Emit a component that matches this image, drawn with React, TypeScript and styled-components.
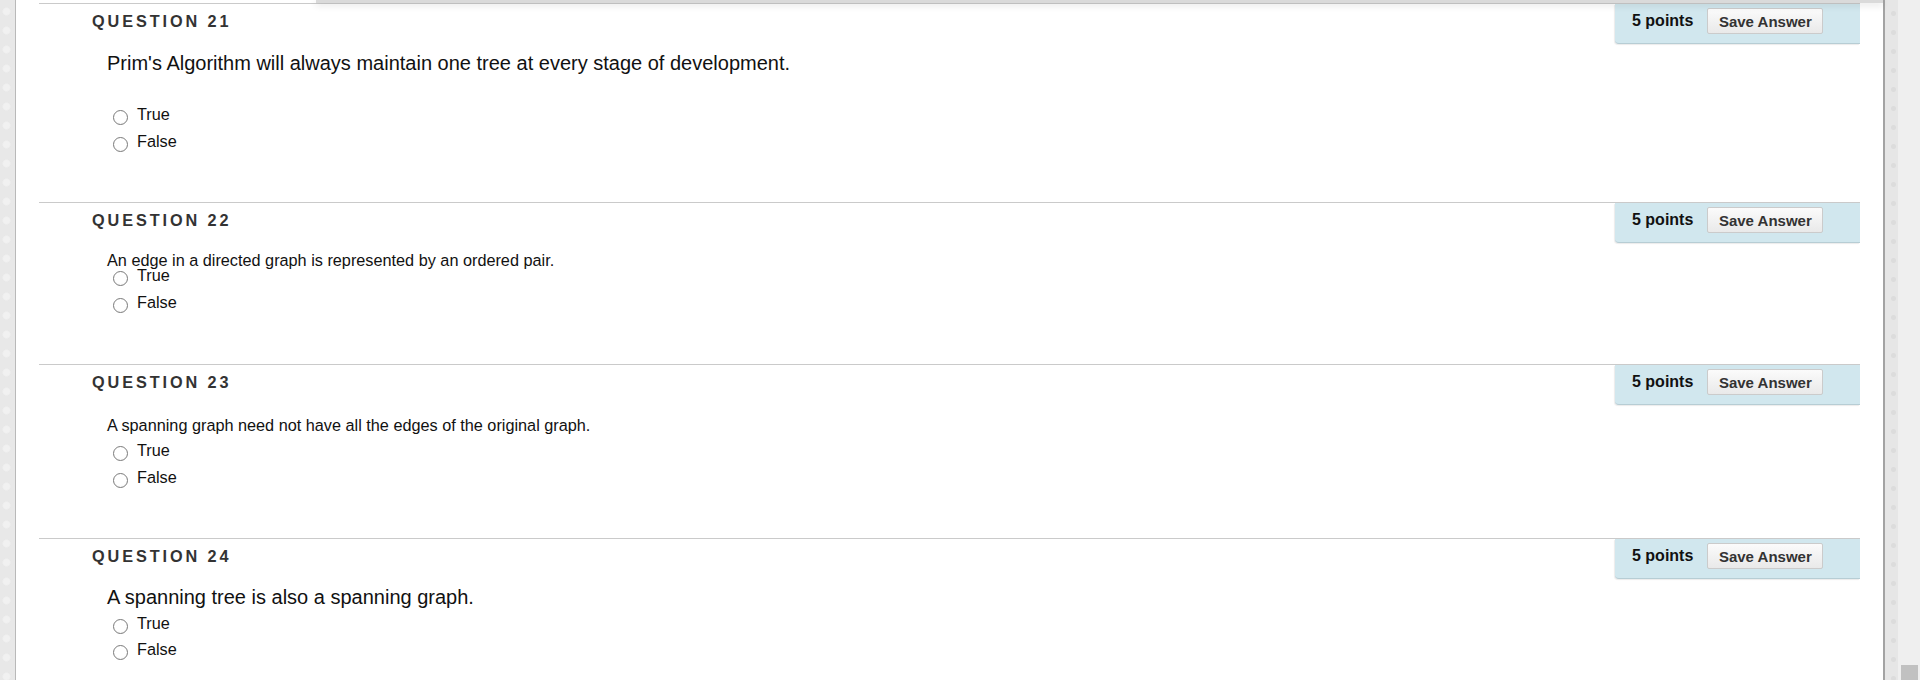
import React from 'react'
import styled, { createGlobalStyle } from 'styled-components'

const GlobalStyle = createGlobalStyle`
  html, body {
    margin: 0;
    padding: 0;
    background: #fff;
    overflow: hidden;
  }
  body {
    font-family: "Liberation Sans", Arial, sans-serif;
  }
`

const Page = styled.div`
  display: flex;
  width: 1920px;
  height: 680px;
  overflow: hidden;
`

const LeftRail = styled.div`
  width: 15px;
  flex-shrink: 0;
  border-right: 1px solid #b9b9b9;
  background-color: #e8e8e8;
  background-image: radial-gradient(circle, #f1f1f1 0, #f1f1f1 3px, transparent 4.5px);
  background-size: 15px 19px;
  background-position: -1px 2px;
`

const Main = styled.div`
  position: relative;
  flex: 1;
  padding-top: 3px;
  background: #fff;
`

const TopShadow = styled.div`
  position: absolute;
  top: 0;
  left: 300px;
  right: 0;
  height: 3px;
  background: #dadada;
  box-shadow: 0 2px 7px rgba(0, 0, 0, 0.16);
  z-index: 2;
`

const RightRail = styled.div`
  width: 13px;
  flex-shrink: 0;
  border-left: 2px solid #a3a3a3;
  background-color: #e6e6e6;
  background-image: radial-gradient(circle, #dcdcdc 0, #dcdcdc 2px, transparent 3px);
  background-size: 13px 19px;
  background-position: 2px 4px;
`

const Scrollbar = styled.div`
  width: 22px;
  flex-shrink: 0;
  background: #efefef;
  display: flex;
  flex-direction: column;
  justify-content: flex-end;
  align-items: center;
`

const Thumb = styled.div`
  width: 17px;
  height: 15px;
  margin-left: 1px;
  background: #c1c1c1;
`

const Section = styled.section<{ $height: number }>`
  box-sizing: border-box;
  height: ${p => p.$height}px;
  margin: 0 23px;
  border-top: 1px solid #cacaca;
`

const Header = styled.div`
  display: flex;
  justify-content: space-between;
  align-items: flex-start;
  height: 40px;
`

const Label = styled.h3`
  margin: 0;
  padding: 7.5px 0 0 53px;
  font-size: 16.25px;
  line-height: 18px;
  font-weight: bold;
  letter-spacing: 2.9px;
  color: #333;
`

const PointsBox = styled.div`
  box-sizing: border-box;
  display: flex;
  align-items: flex-start;
  width: 245px;
  height: 40px;
  padding: 4px 0 0 17px;
  background: #d1e7ee;
  border-bottom: 1px solid #b7cdd4;
  border-bottom-left-radius: 4px;
  box-shadow: -1px 1px 1px rgba(0, 0, 0, 0.08);
`

const Points = styled.span`
  font-size: 16px;
  line-height: 26px;
  font-weight: bold;
  color: #111;
  margin-right: 14px;
`

const SaveButton = styled.button`
  box-sizing: border-box;
  width: 116px;
  height: 26px;
  padding: 0;
  border: 1px solid #cbcbcb;
  border-radius: 2px;
  background: linear-gradient(#fbfbfb, #e9e9e9);
  font-family: "Liberation Sans", Arial, sans-serif;
  font-size: 15px;
  font-weight: bold;
  color: #333;
  cursor: pointer;
`

const QuestionText = styled.div<{ $large?: boolean; $mt: number }>`
  margin: ${p => p.$mt}px 0 0 68px;
  font-size: ${p => (p.$large ? '20px' : '16.25px')};
  line-height: ${p => (p.$large ? '24px' : '16px')};
  color: #111;
`

const Options = styled.div<{ $mt: number }>`
  display: flex;
  flex-direction: column;
  gap: 6.7px;
  margin: ${p => p.$mt}px 0 0 74px;
`

const Option = styled.label`
  display: flex;
  align-items: flex-start;
  gap: 9px;
  height: 20px;
  font-size: 16.25px;
  line-height: 20px;
  color: #111;
`

const Radio = styled.span`
  box-sizing: border-box;
  flex-shrink: 0;
  width: 15px;
  height: 15px;
  margin-top: 6px;
  border: 1px solid #7a7a7a;
  border-radius: 50%;
  background: radial-gradient(circle at 50% 40%, #fff 0, #fff 55%, #f0f0f0 100%);
`

type Q = {
  num: number
  text: string
  large?: boolean
  textMt: number
  optMt: number
  height: number
}

const questions: Q[] = [
  {
    num: 21,
    text: "Prim's Algorithm will always maintain one tree at every stage of development.",
    large: true,
    textMt: 6.5,
    optMt: 29.5,
    height: 199,
  },
  {
    num: 22,
    text: 'An edge in a directed graph is represented by an ordered pair.',
    textMt: 8.5,
    optMt: -2.5,
    height: 162,
  },
  {
    num: 23,
    text: 'A spanning graph need not have all the edges of the original graph.',
    textMt: 12,
    optMt: 7,
    height: 174,
  },
  {
    num: 24,
    text: 'A spanning tree is also a spanning graph.',
    large: true,
    textMt: 5.5,
    optMt: 4,
    height: 200,
  },
]

const App: React.FC = () => {
  return (
    <>
      <GlobalStyle />
      <Page>
        <LeftRail />
        <Main>
          <TopShadow />
          {questions.map(q => (
            <Section key={q.num} $height={q.height}>
              <Header>
                <Label>QUESTION {q.num}</Label>
                <PointsBox>
                  <Points>5 points</Points>
                  <SaveButton>Save Answer</SaveButton>
                </PointsBox>
              </Header>
              <QuestionText $large={q.large} $mt={q.textMt}>
                {q.text}
              </QuestionText>
              <Options $mt={q.optMt}>
                <Option>
                  <Radio />
                  True
                </Option>
                <Option>
                  <Radio />
                  False
                </Option>
              </Options>
            </Section>
          ))}
        </Main>
        <RightRail />
        <Scrollbar>
          <Thumb />
        </Scrollbar>
      </Page>
    </>
  )
}

export default App
